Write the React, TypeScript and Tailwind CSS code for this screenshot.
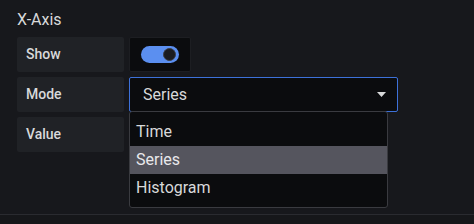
const OPTIONS = ['Time', 'Series', 'Histogram']

function FieldLabel({ children }: { children: string }) {
  return (
    <div className="flex h-[35px] w-[107px] shrink-0 items-center rounded-[2px] bg-[#202226] pl-[9px] text-[14px] font-medium text-[#d8d9da]">
      {children}
    </div>
  )
}

export default function App() {
  return (
    <div
      className="flex h-[224px] w-[474px] flex-col bg-[#17181c] text-[#d8d9da]"
      style={{ fontFamily: 'Roboto, "Liberation Sans", sans-serif' }}
    >
      <div className="flex-1 pl-[17px] pt-[9px]">
        <div className="text-[16px] leading-[22px]">X-Axis</div>

        <div className="mt-[6px] flex flex-col gap-[5px]">
          <div className="flex gap-[5px]">
            <FieldLabel>Show</FieldLabel>
            <div className="flex h-[35px] w-[62px] items-center justify-center rounded-[2px] border border-[#1d1e22] bg-[#0b0c0e]">
              <div className="flex h-[17px] w-[38px] items-center justify-end rounded-full bg-[#5b8ff0] pr-[3px]">
                <div className="h-[13px] w-[13px] rounded-full border border-[#3b3d44] bg-[#1b1c20]" />
              </div>
            </div>
          </div>

          <div className="flex gap-[5px]">
            <FieldLabel>Mode</FieldLabel>
            <div className="relative">
              <div className="flex h-[35px] w-[269px] items-center justify-between rounded-[2px] border border-[#3d71d9] bg-[#0b0c0e] pl-[13px] pr-[11px] text-[16px]">
                <span>Series</span>
                <svg width="9" height="5" viewBox="0 0 9 5">
                  <path d="M0 0h9L4.5 5z" fill="#d8d9da" />
                </svg>
              </div>

              <div className="absolute left-0 top-[34px] z-10 w-[259px] rounded-[3px] border border-[#3a3b40] bg-[#0b0c0e] pb-[5px] pt-[6px] text-[16px]">
                {OPTIONS.map((opt) => (
                  <div
                    key={opt}
                    className={`flex h-[28px] items-center pl-[6px] ${opt === 'Series' ? 'bg-[#55555e] text-[#e9e9ec]' : ''}`}
                  >
                    {opt}
                  </div>
                ))}
              </div>
            </div>
          </div>

          <div className="flex gap-[5px]">
            <FieldLabel>Value</FieldLabel>
          </div>
        </div>
      </div>
      <div className="h-[10px] border-t border-[#2a2b30] bg-[#16171a]" />
    </div>
  )
}
